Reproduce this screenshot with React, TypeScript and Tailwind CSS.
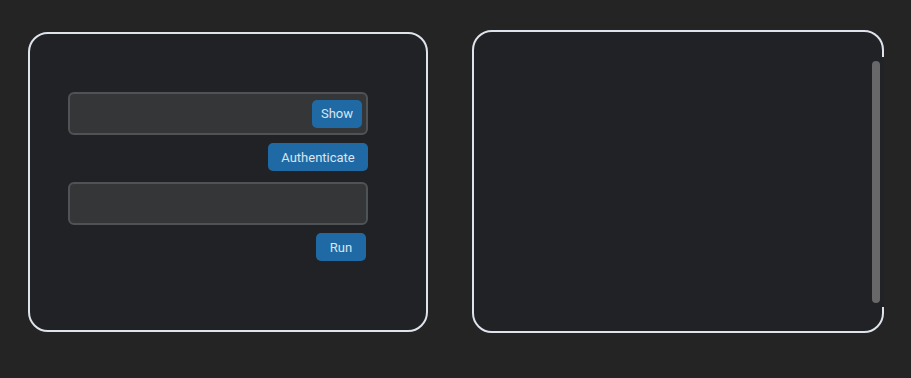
import React from "react";

export default function App() {
  return (
    <div
      className="w-[911px] h-[378px] bg-[#242424] flex items-start pl-[28px] gap-[44px] overflow-hidden"
      style={{ fontFamily: "Roboto, 'Liberation Sans', sans-serif" }}
    >
      {/* Left panel */}
      <div className="mt-[32px] w-[400px] h-[300px] rounded-[20px] border-2 border-[#dfe3ec] bg-[#212226] pt-[58px] pl-[38px]">
        <div className="w-[300px] flex flex-col items-end">
          <div className="w-[300px] h-[43px] rounded-[6px] border-2 border-[#4f5356] bg-[#343638] flex items-center justify-end pr-[4px]">
            <button className="w-[50px] h-[28px] rounded-[5px] bg-[#1f6aa5] text-[#dce4ee] text-[13px] leading-none">
              Show
            </button>
          </div>
          <button className="mt-[8px] w-[100px] h-[28px] rounded-[5px] bg-[#1f6aa5] text-[#dce4ee] text-[13px] leading-none">
            Authenticate
          </button>
          <div className="mt-[11px] w-[300px] h-[43px] rounded-[6px] border-2 border-[#4f5356] bg-[#343638]" />
          <button className="mt-[8px] mr-[2px] w-[50px] h-[28px] rounded-[5px] bg-[#1f6aa5] text-[#dce4ee] text-[13px] leading-none">
            Run
          </button>
        </div>
      </div>

      {/* Right panel */}
      <div className="relative mt-[30px] w-[412px] h-[303px] rounded-[20px] border-2 border-[#dfe3ec] bg-[#212226]">
        <div className="absolute right-[-2px] top-[25px] w-[13px] h-[250px] bg-[#212226] flex justify-start pl-[1px] pt-[4px]">
          <div className="w-[8px] h-[242px] rounded-[4px] bg-[#686868]" />
        </div>
      </div>
    </div>
  );
}
